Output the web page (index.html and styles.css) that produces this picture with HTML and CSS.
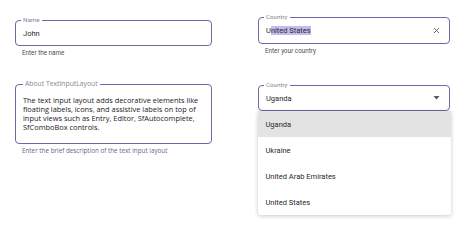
FILE: index.html
```html
<!DOCTYPE html>
<html lang="en">
<head>
  <meta charset="UTF-8" />
  <meta name="viewport" content="width=device-width, initial-scale=1.0" />
  <title>Text Input Layout</title>
  <link rel="stylesheet" href="styles.css">
</head>
<body>

<main class="demo">
  <!-- left column: plain entry + multi-line editor -->
  <section class="col">
    <div class="field single name-field">
      <span class="float-label">Name</span>
      <span class="value">John</span>
    </div>
    <p class="helper">Enter the name</p>

    <div class="field about-field">
      <span class="float-label">About TextInputLayout</span>
      <p class="multi">The text input layout adds decorative elements like floating labels, icons, and assistive labels on top of input views such as Entry, Editor, SfAutocomplete, SfComboBox controls.</p>
    </div>
    <p class="helper helper-about">Enter the brief description of the text input layout</p>
  </section>

  <!-- right column: autocomplete + open combo box -->
  <section class="col">
    <div class="field single country-field">
      <span class="float-label">Country</span>
      <span class="value">U<span class="sel">nited States</span></span>
      <svg class="clear" width="7" height="7" viewBox="0 0 7 7">
        <path d="M1 1L6 6M6 1L1 6" stroke="#6b6870" stroke-width="1" fill="none"/>
      </svg>
    </div>
    <p class="helper">Enter your country</p>

    <div class="field single combo-field">
      <span class="float-label">Country</span>
      <span class="value">Uganda</span>
      <svg class="caret" width="7" height="4" viewBox="0 0 7 4">
        <path d="M0.5 0H6.5L3.5 3.5Z" fill="#5a5760"/>
      </svg>
      <ul class="dropdown">
        <li class="active">Uganda</li>
        <li>Ukraine</li>
        <li>United Arab Emirates</li>
        <li>United States</li>
      </ul>
    </div>
  </section>
</main>

</body>
</html>
```

FILE: styles.css
```css
*       { box-sizing:border-box; margin:0; padding:0; }
html, body { min-height:100vh; }
body    { font-family:Roboto,sans-serif; background:#fff; color:#2a282d; }

.demo   { display:grid; grid-template-columns:197px 192px; column-gap:46px; padding-left:15px; min-height:100vh; align-content:start; }
.col    { display:flex; flex-direction:column; }

/* outlined field */
.field  { position:relative; border:1.5px solid #7266a8; border-radius:4px; }
.float-label { position:absolute; left:5px; top:-5px; padding:0 2px; background:#fff;
               font-size:6.2px; line-height:8px; color:#8a8592; }
.single { height:26px; display:flex; align-items:center; padding:0 7px; font-size:7.5px; }
.value  { flex:1; }
.sel    { background:#c6bbee; }
.clear, .caret { flex:none; margin-right:2px; }

.helper { font-size:6.3px; line-height:8px; color:#4f4c55; padding-left:7px; margin-top:3px; }
.helper-about { color:#6a6390; font-family:'Open Sans',sans-serif; font-size:6.3px; }

.name-field    { margin-top:20px; }
.about-field   { margin-top:27px; padding:11px 8px 11px 7px; }
.about-field .float-label { font-family:'Open Sans',sans-serif; font-size:6.8px; left:7px; top:-5.5px; }
.multi  { font-family:'Open Sans',sans-serif; font-size:7.4px; line-height:9px; color:#222025; }

.country-field { margin-top:17px; height:27px; }
.combo-field   { margin-top:30px; }

/* open combo list */
.dropdown { position:absolute; top:calc(100% + 1px); left:-1.5px; right:-1.5px; list-style:none;
            background:#fff; border-radius:0 0 3px 3px; box-shadow:0 1px 4px rgba(0,0,0,.22); z-index:2; }
.dropdown li { height:26px; display:flex; align-items:center; padding-left:8px; font-size:7.5px; }
.dropdown li.active { background:#e3e3e3; }
```
